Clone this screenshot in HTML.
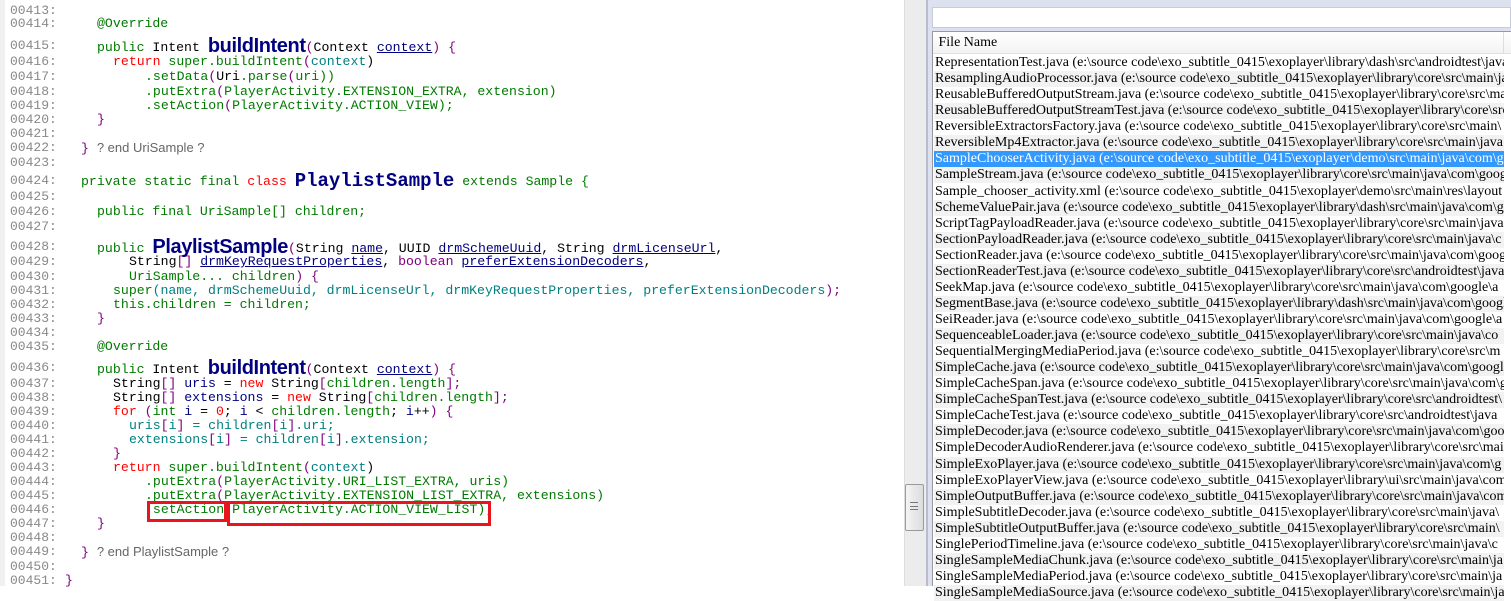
<!DOCTYPE html>
<html><head><meta charset="utf-8"><style>
*{margin:0;padding:0;box-sizing:border-box}
body{width:1511px;height:586px;overflow:hidden;background:#fff;position:relative;font-family:"Liberation Mono",monospace;font-size:13.2px}
.l{position:absolute;left:0;height:16px;line-height:16px;white-space:pre;color:#000}
.n{position:absolute;left:10px;color:#888;font-size:13px}
.c{position:absolute;left:81px}
.g{color:#007a00}.t{color:#008080}.v{color:#000080}.r{color:#f00}.p{color:#800080}.k{color:#000}
.u{text-decoration:underline;color:#000080}
.bs{font-family:"Liberation Sans",sans-serif;font-weight:bold;font-size:20px;color:#000080;letter-spacing:-0.4px;vertical-align:-1px}
.bm{font-weight:bold;font-size:19px;color:#000080;vertical-align:-1px}
.cm{font-family:"Liberation Sans",sans-serif;color:#666;font-size:13px}
.gut{position:absolute;left:0;top:0;width:5px;height:586px;background:#f0f0f0}
.row{position:absolute;left:934px;width:570px;height:16px;line-height:16px;font-family:"Liberation Serif",serif;font-size:14px;white-space:nowrap;overflow:hidden;padding-left:1px;letter-spacing:0}
</style></head><body>
<div class="gut"></div>
<div class="l" style="top:3px"><span class="n">00413:</span></div>
<div class="l" style="top:16px"><span class="n">00414:</span><span class="c g" style="left:97px">@Override</span></div>
<div class="l" style="top:38px"><span class="n">00415:</span><span class="c" style="left:97px"><span class="g">public</span> <span class="k">Intent</span> <span class="bs">buildIntent</span><span class="p">(</span>Context <span class="u">context</span><span class="p">) {</span></span></div>
<div class="l" style="top:54px"><span class="n">00416:</span><span class="c" style="left:113px"><span class="r">return</span> <span class="g">super.buildIntent</span><span class="p">(</span><span class="t">context</span>)</span></div>
<div class="l" style="top:69px"><span class="n">00417:</span><span class="c g" style="left:145px">.setData<span class="p">(</span><span class="k">Uri</span>.parse<span class="p">(</span>uri))</span></div>
<div class="l" style="top:84px"><span class="n">00418:</span><span class="c g" style="left:145px">.putExtra<span class="p">(</span>PlayerActivity.EXTENSION_EXTRA, extension)</span></div>
<div class="l" style="top:98px"><span class="n">00419:</span><span class="c g" style="left:145px">.setAction<span class="p">(</span>PlayerActivity.ACTION_VIEW);</span></div>
<div class="l" style="top:112px"><span class="n">00420:</span><span class="c p" style="left:97px">}</span></div>
<div class="l" style="top:126px"><span class="n">00421:</span></div>
<div class="l" style="top:140px"><span class="n">00422:</span><span class="c" style="left:81px"><span class="p">}</span> <span class="cm">? end UriSample ?</span></span></div>
<div class="l" style="top:155px"><span class="n">00423:</span></div>
<div class="l" style="top:173px"><span class="n">00424:</span><span class="c g"><span>private static final</span> <span class="r">class</span> <span class="bm">PlaylistSample</span> extends Sample {</span></div>
<div class="l" style="top:189px"><span class="n">00425:</span></div>
<div class="l" style="top:204px"><span class="n">00426:</span><span class="c g" style="left:97px">public final UriSample[] children;</span></div>
<div class="l" style="top:219px"><span class="n">00427:</span></div>
<div class="l" style="top:239px"><span class="n">00428:</span><span class="c" style="left:97px"><span class="g">public</span> <span class="bs">PlaylistSample</span><span class="p">(</span>String <span class="u">name</span>, UUID <span class="u">drmSchemeUuid</span>, String <span class="u">drmLicenseUrl</span>,</span></div>
<div class="l" style="top:254px"><span class="n">00429:</span><span class="c" style="left:129px">String<span class="p">[]</span> <span class="u">drmKeyRequestProperties</span>, <span class="p">boolean</span> <span class="u">preferExtensionDecoders</span>,</span></div>
<div class="l" style="top:269px"><span class="n">00430:</span><span class="c g" style="left:129px">UriSample... children<span class="p">) {</span></span></div>
<div class="l" style="top:283px"><span class="n">00431:</span><span class="c t" style="left:113px"><span class="g">super</span>(name, drmSchemeUuid, drmLicenseUrl, drmKeyRequestProperties, preferExtensionDecoders<span class="p">);</span></span></div>
<div class="l" style="top:297px"><span class="n">00432:</span><span class="c g" style="left:113px">this.children = children;</span></div>
<div class="l" style="top:311px"><span class="n">00433:</span><span class="c p" style="left:97px">}</span></div>
<div class="l" style="top:325px"><span class="n">00434:</span></div>
<div class="l" style="top:339px"><span class="n">00435:</span><span class="c g" style="left:97px">@Override</span></div>
<div class="l" style="top:360px"><span class="n">00436:</span><span class="c" style="left:97px"><span class="g">public</span> Intent <span class="bs">buildIntent</span><span class="p">(</span>Context <span class="u">context</span><span class="p">) {</span></span></div>
<div class="l" style="top:376px"><span class="n">00437:</span><span class="c" style="left:113px">String<span class="p">[]</span> <span class="v">uris</span> = <span class="r">new</span> String<span class="p">[</span><span class="g">children.length</span><span class="p">];</span></span></div>
<div class="l" style="top:390px"><span class="n">00438:</span><span class="c" style="left:113px">String<span class="p">[]</span> <span class="v">extensions</span> = <span class="r">new</span> String<span class="p">[</span><span class="g">children.length</span><span class="p">];</span></span></div>
<div class="l" style="top:404px"><span class="n">00439:</span><span class="c" style="left:113px"><span class="r">for</span> <span class="p">(</span><span class="g">int</span> <span class="v">i</span> = <span class="r">0</span>; <span class="v">i</span> &lt; <span class="g">children.length</span>; <span class="v">i</span>++<span class="p">) {</span></span></div>
<div class="l" style="top:418px"><span class="n">00440:</span><span class="c t" style="left:129px">uris<span class="p">[</span>i<span class="p">]</span> = children<span class="p">[</span>i<span class="p">]</span>.uri;</span></div>
<div class="l" style="top:432px"><span class="n">00441:</span><span class="c t" style="left:129px">extensions<span class="p">[</span>i<span class="p">]</span> = children<span class="p">[</span>i<span class="p">]</span>.extension;</span></div>
<div class="l" style="top:446px"><span class="n">00442:</span><span class="c p" style="left:113px">}</span></div>
<div class="l" style="top:460px"><span class="n">00443:</span><span class="c" style="left:113px"><span class="r">return</span> <span class="g">super.buildIntent</span><span class="p">(</span><span class="t">context</span>)</span></div>
<div class="l" style="top:474px"><span class="n">00444:</span><span class="c g" style="left:145px">.putExtra<span class="p">(</span>PlayerActivity.URI_LIST_EXTRA, uris)</span></div>
<div class="l" style="top:488px"><span class="n">00445:</span><span class="c g" style="left:145px">.putExtra<span class="p">(</span>PlayerActivity.EXTENSION_LIST_EXTRA, extensions)</span></div>
<div class="l" style="top:502px"><span class="n">00446:</span><span class="c g" style="left:145px">.setAction<span class="p">(</span>PlayerActivity.ACTION_VIEW_LIST);</span></div>
<div class="l" style="top:516px"><span class="n">00447:</span><span class="c p" style="left:97px">}</span></div>
<div class="l" style="top:530px"><span class="n">00448:</span></div>
<div class="l" style="top:544px"><span class="n">00449:</span><span class="c" style="left:81px"><span class="p">}</span> <span class="cm">? end PlaylistSample ?</span></span></div>
<div class="l" style="top:559px"><span class="n">00450:</span></div>
<div class="l" style="top:573px"><span class="n">00451:</span><span class="c p" style="left:65px">}</span></div>
<div style="position:absolute;left:147px;top:501px;width:80px;height:21px;border:3px solid #e8141e"></div>
<div style="position:absolute;left:227px;top:501px;width:264px;height:25px;border:3px solid #e8141e"></div>

<div style="position:absolute;left:904px;top:0;width:22px;height:586px;background:#ececec;border-left:1px solid #ddd"></div>
<div style="position:absolute;left:905px;top:484px;width:19px;height:47px;background:linear-gradient(90deg,#f4f4f4,#dcdcdc);border:1px solid #9a9a9a;border-radius:2px"></div>
<div style="position:absolute;left:910px;top:502px;width:8px;height:8px;border-top:1px solid #777;border-bottom:1px solid #777"><div style="margin-top:3px;border-top:1px solid #777"></div></div>
<div style="position:absolute;left:926px;top:0;width:585px;height:586px;background:#dde0ee;border-left:2px solid #b8bccc"></div>
<div style="position:absolute;left:932px;top:7px;width:579px;height:21px;background:#fff;border:1px solid #c8ccd8"></div>
<div style="position:absolute;left:932px;top:31px;width:579px;height:555px;background:#fff;border-left:1px solid #999;border-top:1px solid #999"></div>
<div style="position:absolute;left:933px;top:32px;width:578px;height:22px;background:linear-gradient(#fff,#f3f3f3);border-bottom:1px solid #e0e0e0"></div>
<div style="position:absolute;left:1503px;top:32px;width:1px;height:22px;background:#ddd"></div>
<div class="row" style="top:35px;font-size:14px">&nbsp;File Name</div>
<div id="rows"></div>
<script>
var f=[["RepresentationTest.java","library\\dash\\src\\androidtest\\java"],["ResamplingAudioProcessor.java","library\\core\\src\\main\\java"],["ReusableBufferedOutputStream.java","library\\core\\src\\main"],["ReusableBufferedOutputStreamTest.java","library\\core\\src"],["ReversibleExtractorsFactory.java","library\\core\\src\\main\\"],["ReversibleMp4Extractor.java","library\\core\\src\\main\\java"],["SampleChooserActivity.java","demo\\src\\main\\java\\com\\g"],["SampleStream.java","library\\core\\src\\main\\java\\com\\goog"],["Sample_chooser_activity.xml","demo\\src\\main\\res\\layout"],["SchemeValuePair.java","library\\dash\\src\\main\\java\\com\\g"],["ScriptTagPayloadReader.java","library\\core\\src\\main\\java"],["SectionPayloadReader.java","library\\core\\src\\main\\java\\c"],["SectionReader.java","library\\core\\src\\main\\java\\com\\goog"],["SectionReaderTest.java","library\\core\\src\\androidtest\\java"],["SeekMap.java","library\\core\\src\\main\\java\\com\\google\\a"],["SegmentBase.java","library\\dash\\src\\main\\java\\com\\google"],["SeiReader.java","library\\core\\src\\main\\java\\com\\google\\a"],["SequenceableLoader.java","library\\core\\src\\main\\java\\co"],["SequentialMergingMediaPeriod.java","library\\core\\src\\m"],["SimpleCache.java","library\\core\\src\\main\\java\\com\\googl"],["SimpleCacheSpan.java","library\\core\\src\\main\\java\\com\\g"],["SimpleCacheSpanTest.java","library\\core\\src\\androidtest\\"],["SimpleCacheTest.java","library\\core\\src\\androidtest\\java"],["SimpleDecoder.java","library\\core\\src\\main\\java\\com\\goo"],["SimpleDecoderAudioRenderer.java","library\\core\\src\\mai"],["SimpleExoPlayer.java","library\\core\\src\\main\\java\\com\\g"],["SimpleExoPlayerView.java","library\\ui\\src\\main\\java\\com"],["SimpleOutputBuffer.java","library\\core\\src\\main\\java\\com"],["SimpleSubtitleDecoder.java","library\\core\\src\\main\\java\\"],["SimpleSubtitleOutputBuffer.java","library\\core\\src\\main\\"],["SinglePeriodTimeline.java","library\\core\\src\\main\\java\\c"],["SingleSampleMediaChunk.java","library\\core\\src\\main\\ja"],["SingleSampleMediaPeriod.java","library\\core\\src\\main\\ja"],["SingleSampleMediaSource.java","library\\core\\src\\main\\ja"]];
var h="";
for(var i=0;i<f.length;i++){var t=55+i*16.06;var bg=i==6?"#3399ff":(i%2?"#f2f2f2":"#fff");var col=i==6?"#fff":"#000";
h+='<div class="row" style="top:'+t.toFixed(1)+'px;background:'+bg+';color:'+col+'">'+f[i][0]+' (e:\\source code\\exo_subtitle_0415\\exoplayer\\'+f[i][1]+'</div>';}
document.getElementById("rows").innerHTML=h;
</script>
</body></html>
